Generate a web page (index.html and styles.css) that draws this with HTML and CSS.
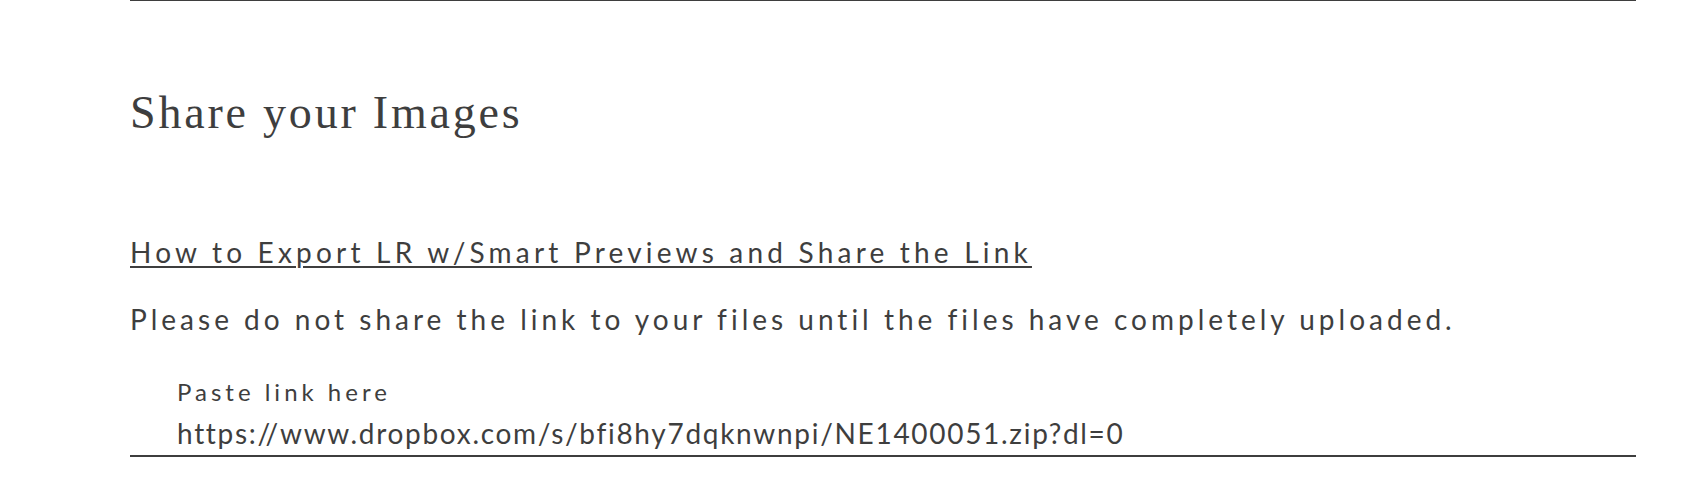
FILE: index.html
```html
<!DOCTYPE html>
<html lang="en">
<head>
  <meta charset="UTF-8" />
  <meta name="viewport" content="width=device-width, initial-scale=1.0" />
  <title>Share your Images</title>
  <link rel="stylesheet" href="styles.css">
</head>
<body>
  <section class="share">
    <h2 class="share-title">Share your Images</h2>

    <a class="share-help" href="#">How to Export LR w/Smart Previews and Share the Link</a>
    <p class="share-note">Please do not share the link to your files until the files have completely uploaded.</p>

    <div class="field">
      <label class="field-label" for="link">Paste link here</label>
      <input class="field-input" id="link" type="text" value="https://www.dropbox.com/s/bfi8hy7dqknwnpi/NE1400051.zip?dl=0" />
    </div>
  </section>
</body>
</html>
```

FILE: styles.css
```css
:root {
  --ink: #3e3e3e;
}

body {
  margin: 0;
  font-family: 'Lato', sans-serif;
  color: var(--ink);
  background: #fff;
}

.share {
  margin: 0 70px 0 130px;
  border-top: 1px solid var(--ink);
  padding-top: 89px;
}

.share-title {
  margin: 0;
  font-family: 'Liberation Serif', serif;
  font-weight: normal;
  font-size: 46px;
  line-height: 46px;
  letter-spacing: 2.8px;
}

.share-help {
  display: block;
  margin-top: 102px;
  font-size: 28px;
  line-height: 28px;
  letter-spacing: 4.2px;
  color: var(--ink);
  text-decoration: underline;
  text-underline-offset: 3px;
  text-decoration-thickness: 2px;
  width: max-content;
}

.share-note {
  margin: 39px 0 0;
  font-size: 28px;
  line-height: 28px;
  letter-spacing: 4px;
}

.field {
  display: flex;
  flex-direction: column;
  margin-top: 47px;
}

.field-label {
  padding-left: 47px;
  font-size: 24px;
  line-height: 24px;
  letter-spacing: 4px;
}

.field-input {
  box-sizing: border-box;
  height: 38px;
  margin-top: 15px;
  padding: 0 0 8px 47px;
  border: none;
  border-bottom: 2px solid var(--ink);
  outline: none;
  background: transparent;
  font-family: 'Lato', sans-serif;
  font-size: 28px;
  line-height: 28px;
  letter-spacing: 1.7px;
  color: var(--ink);
}
```
